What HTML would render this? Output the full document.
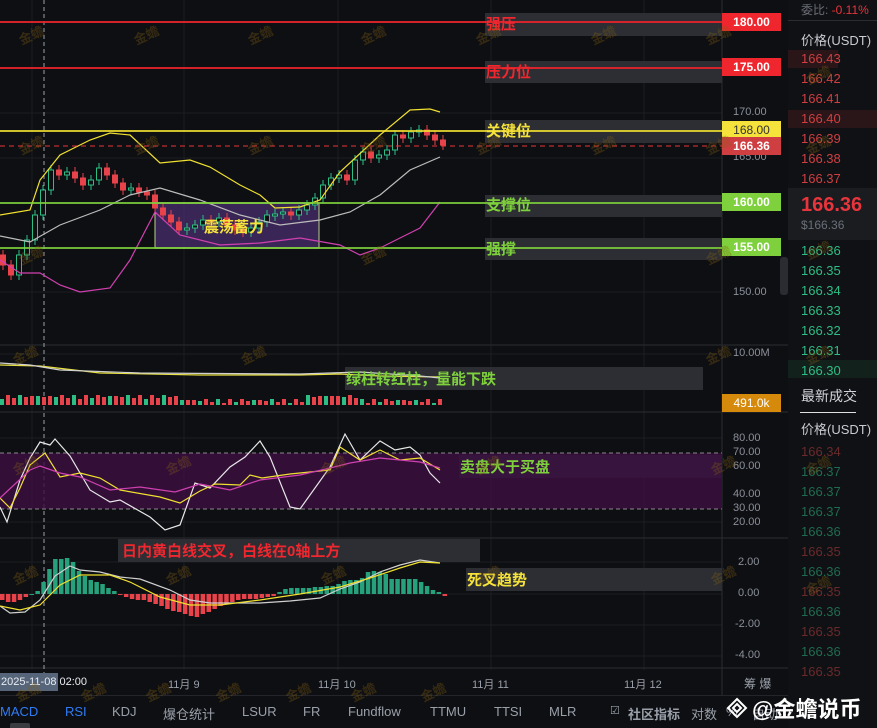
<!DOCTYPE html>
<html><head><meta charset="utf-8">
<style>
*{margin:0;padding:0;box-sizing:border-box}
body{width:877px;height:728px;background:#0e0f12;overflow:hidden;position:relative;font-family:"Liberation Sans","Noto Sans CJK SC",sans-serif;color:#c8cbd2}
.abs{position:absolute;white-space:nowrap}
.ax{position:absolute;left:733px;font-size:11px;color:#8a8f9a}
.tag{position:absolute;left:722px;width:59px;height:18px;font-size:12px;font-weight:bold;color:#fff;text-align:center;line-height:18px}
.rp{position:absolute;left:801px;font-size:13px}
.tb{position:absolute;top:704px;font-size:13px;color:#9aa0aa}
</style></head><body>
<svg width="788" height="700" style="position:absolute;left:0;top:0" id="s">
<g stroke="#1c1e23" stroke-width="1">
<line x1="32" y1="0" x2="32" y2="670"/><line x1="184" y1="0" x2="184" y2="670"/><line x1="338" y1="0" x2="338" y2="670"/><line x1="491" y1="0" x2="491" y2="670"/><line x1="644" y1="0" x2="644" y2="670"/>
<line x1="0" y1="113" x2="722" y2="113"/><line x1="0" y1="158" x2="722" y2="158"/><line x1="0" y1="292" x2="722" y2="292"/>
<line x1="0" y1="354" x2="722" y2="354"/><line x1="0" y1="438" x2="722" y2="438"/><line x1="0" y1="522" x2="722" y2="522"/>
<line x1="0" y1="562" x2="722" y2="562"/><line x1="0" y1="594" x2="722" y2="594"/><line x1="0" y1="625" x2="722" y2="625"/><line x1="0" y1="656" x2="722" y2="656"/>
</g>
<line x1="722" y1="0" x2="722" y2="695" stroke="#2a2c31"/>
<line x1="0" y1="345" x2="788" y2="345" stroke="#2a2c31"/><line x1="0" y1="412" x2="788" y2="412" stroke="#2a2c31"/><line x1="0" y1="538" x2="788" y2="538" stroke="#2a2c31"/><line x1="0" y1="668" x2="788" y2="668" stroke="#2a2c31"/>
<line x1="44" y1="0" x2="44" y2="690" stroke="#9aa0aa" stroke-dasharray="4 3"/>
<g fill="#2c2e33">
<rect x="485" y="13" width="237" height="23"/><rect x="485" y="61" width="237" height="22"/><rect x="485" y="120" width="237" height="23"/><rect x="485" y="195" width="237" height="22"/><rect x="485" y="238" width="237" height="22"/>
<rect x="345" y="367" width="358" height="23"/><rect x="459" y="455" width="263" height="23"/><rect x="118" y="539" width="362" height="23"/><rect x="466" y="568" width="256" height="23"/>
</g>
<rect x="155" y="203" width="164" height="45" fill="#4a2f6e" fill-opacity=".75" stroke="#b8d08a" stroke-width="1"/>
<rect x="0" y="453" width="722" height="56" fill="#3a0f40" fill-opacity=".85"/>
<line x1="0" y1="453" x2="722" y2="453" stroke="#888" stroke-dasharray="4 3"/><line x1="0" y1="509" x2="722" y2="509" stroke="#888" stroke-dasharray="4 3"/>
<g id="cand"></g><g id="vol"></g><g id="macd"></g>
<g fill="none" stroke-width="1.2">
<polyline stroke="#f0e030" points="0,215 30,210 40,180 60,155 90,140 110,133 130,135 160,163 190,160 210,167 240,185 260,195 275,208 300,207 320,200 340,172 380,135 410,110 430,109 440,112"/>
<polyline stroke="#bcbcbc" points="0,236 30,242 60,225 100,210 130,195 160,188 200,200 240,215 280,225 320,220 350,212 380,195 410,170 440,157"/>
<polyline stroke="#d040b0" points="0,260 20,273 40,273 60,285 80,292 110,288 130,260 155,212 180,235 220,245 260,243 300,238 340,245 360,255 380,248 400,238 420,228 440,202"/>
<polyline stroke="#e8e8e8" points="0,507 7,522 20,480 30,458 40,442 50,445 55,439 70,456 90,490 110,502 120,500 150,517 165,530 180,525 195,483 210,488 230,467 245,457 260,441 270,457 290,507 300,509 330,467 345,434 360,460 380,441 395,450 410,447 420,455 430,473 440,483"/>
<polyline stroke="#f0e030" points="0,498 10,508 20,488 30,465 45,453 60,477 80,473 100,478 120,490 160,497 180,503 200,491 215,484 240,485 250,475 262,478 290,474 300,473 330,470 340,447 360,460 380,450 400,460 420,458 440,470"/>
<polyline stroke="#d040b0" points="0,498 30,470 40,466 60,473 80,477 110,490 140,487 175,492 200,484 230,490 260,480 300,475 330,468 350,463 380,458 420,462 440,468"/>
<polyline stroke="#d0d0d0" points="0,606 10,613 25,612 40,600 55,576 70,566 80,570 100,572 120,577 140,579 170,590 190,600 210,603 230,603 260,603 290,601 320,598 340,589 360,582 380,572 400,565 420,560 440,563"/>
<polyline stroke="#f0e030" points="0,606 20,610 40,605 60,585 80,575 110,575 130,582 160,597 190,605 220,605 260,600 300,594 340,587 370,578 400,568 420,562 440,563"/>
<polyline stroke="#e8e040" points="0,365 40,366 100,373 200,375 300,375 340,374 380,376 440,377"/>
<polyline stroke="#d0d0d0" points="0,363 30,365 60,370 140,373 300,374 360,372 420,376 440,378"/>
</g>
<line x1="0" y1="22" x2="722" y2="22" stroke="#e8242c" stroke-width="2" opacity=".9"/>
<line x1="0" y1="68" x2="722" y2="68" stroke="#e8242c" stroke-width="2" opacity=".9"/>
<line x1="0" y1="131" x2="722" y2="131" stroke="#f0e030" stroke-width="2" opacity=".85"/>
<line x1="0" y1="146" x2="722" y2="146" stroke="#e8343c" stroke-dasharray="5 4"/>
<line x1="0" y1="203" x2="722" y2="203" stroke="#7ed03c" stroke-width="2" opacity=".85"/>
<line x1="0" y1="248" x2="722" y2="248" stroke="#7ed03c" stroke-width="2" opacity=".85"/>
</svg>
<div class="abs" style="left:486px;top:13px;font-size:15px;font-weight:bold;color:#f2262e">强压</div>
<div class="abs" style="left:486px;top:61px;font-size:15px;font-weight:bold;color:#f2262e">压力位</div>
<div class="abs" style="left:486px;top:120px;font-size:15px;font-weight:bold;color:#f5e23a">关键位</div>
<div class="abs" style="left:486px;top:194px;font-size:15px;font-weight:bold;color:#7ed03c">支撑位</div>
<div class="abs" style="left:486px;top:238px;font-size:15px;font-weight:bold;color:#7ed03c">强撑</div>
<div class="abs" style="left:204px;top:216px;font-size:15px;font-weight:bold;color:#f5e23a">震荡蓄力</div>
<div class="abs" style="left:346px;top:368px;font-size:15px;font-weight:bold;color:#7ed03c">绿柱转红柱，量能下跌</div>
<div class="abs" style="left:460px;top:456px;font-size:15px;font-weight:bold;color:#7ed03c">卖盘大于买盘</div>
<div class="abs" style="left:122px;top:540px;font-size:15px;font-weight:bold;color:#f2262e">日内黄白线交叉，白线在0轴上方</div>
<div class="abs" style="left:467px;top:569px;font-size:15px;font-weight:bold;color:#f5e23a">死叉趋势</div>
<div class="ax" style="top:106px">170.00</div>
<div class="ax" style="top:151px">165.00</div>
<div class="ax" style="top:286px">150.00</div>
<div class="ax" style="top:347px">10.00M</div>
<div class="ax" style="top:432px">80.00</div>
<div class="ax" style="top:446px">70.00</div>
<div class="ax" style="top:460px">60.00</div>
<div class="ax" style="top:488px">40.00</div>
<div class="ax" style="top:502px">30.00</div>
<div class="ax" style="top:516px">20.00</div>
<div class="ax" style="top:556px;left:738px">2.00</div>
<div class="ax" style="top:587px;left:738px">0.00</div>
<div class="ax" style="top:618px;left:735px">-2.00</div>
<div class="ax" style="top:649px;left:735px">-4.00</div>
<div class="tag" style="top:13px;background:#f0262e">180.00</div>
<div class="tag" style="top:58px;background:#f0262e">175.00</div>
<div class="tag" style="top:121px;background:#f5e23a;color:#333;font-weight:normal">168.00</div>
<div class="tag" style="top:137px;background:#cf3f42">166.36</div>
<div class="tag" style="top:193px;background:#7ed03c">160.00</div>
<div class="tag" style="top:238px;background:#7ed03c">155.00</div>
<div class="tag" style="top:394px;background:#d68a0c;font-weight:normal">491.0k</div>
<div class="abs" style="left:780px;top:257px;width:8px;height:38px;background:#2a2c31;border-radius:3px"></div>
<div class="abs" style="left:0;top:673px;width:58px;height:18px;background:#56657a;color:#e8ecf2;font-size:11px;line-height:18px;padding-left:1px">2025-11-08 02:00</div>
<div class="abs" style="left:168px;top:676px;font-size:11px;color:#9aa0aa">11月 9</div>
<div class="abs" style="left:318px;top:676px;font-size:11px;color:#9aa0aa">11月 10</div>
<div class="abs" style="left:472px;top:676px;font-size:11px;color:#9aa0aa">11月 11</div>
<div class="abs" style="left:624px;top:676px;font-size:11px;color:#9aa0aa">11月 12</div>
<div class="abs" style="left:744px;top:675px;font-size:12px;color:#9aa0aa">筹 爆</div>
<div class="abs" style="left:0;top:695px;width:788px;height:1px;background:#23252a"></div>
<div class="tb" style="left:0;color:#2f7cf6">MACD</div>
<div class="tb" style="left:65px;color:#2f7cf6">RSI</div>
<div class="tb" style="left:112px">KDJ</div>
<div class="tb" style="left:163px">爆仓统计</div>
<div class="tb" style="left:242px">LSUR</div>
<div class="tb" style="left:303px">FR</div>
<div class="tb" style="left:348px">Fundflow</div>
<div class="tb" style="left:430px">TTMU</div>
<div class="tb" style="left:494px">TTSI</div>
<div class="tb" style="left:549px">MLR</div>
<div class="tb" style="left:610px;font-size:11px">☑</div>
<div class="tb" style="left:628px;font-weight:bold">社区指标</div>
<div class="tb" style="left:691px">对数</div>
<div class="tb" style="left:726px">%</div>
<div class="tb" style="left:752px">自动</div>
<div class="abs" style="left:10px;top:723px;width:20px;height:5px;background:#3a3c42;border-radius:2px 2px 0 0"></div>
<div class="abs" style="left:788px;top:0;width:89px;height:728px;background:#101114"></div>
<div class="rp" style="top:1px;color:#6a6f78;font-size:12px">委比: <span style="color:#e8343c">-0.11%</span></div>
<div class="abs" style="left:788px;top:20px;width:89px;height:1px;background:#2a2c31"></div>
<div class="rp" style="top:30px;color:#c8cbd2">价格(USDT)</div>
<div class="abs" style="left:788px;top:50px;width:50px;height:18px;background:#2a1618"></div>
<div class="abs" style="left:788px;top:110px;width:89px;height:18px;background:#2a1618"></div>
<div class="rp" style="top:51px;color:#cf3f42">166.43</div>
<div class="rp" style="top:71px;color:#cf3f42">166.42</div>
<div class="rp" style="top:91px;color:#cf3f42">166.41</div>
<div class="rp" style="top:111px;color:#cf3f42">166.40</div>
<div class="rp" style="top:131px;color:#cf3f42">166.39</div>
<div class="rp" style="top:151px;color:#cf3f42">166.38</div>
<div class="rp" style="top:171px;color:#cf3f42">166.37</div>
<div class="abs" style="left:788px;top:188px;width:89px;height:52px;background:#1a1c20"></div>
<div class="rp" style="top:194px;color:#e8343c;font-size:20px;font-weight:bold">166.36</div>
<div class="rp" style="top:218px;color:#6a6f78;font-size:12px">$166.36</div>
<div class="abs" style="left:788px;top:360px;width:89px;height:18px;background:#13211c"></div>
<div class="rp" style="top:243px;color:#2ebd85">166.36</div>
<div class="rp" style="top:263px;color:#2ebd85">166.35</div>
<div class="rp" style="top:283px;color:#2ebd85">166.34</div>
<div class="rp" style="top:303px;color:#2ebd85">166.33</div>
<div class="rp" style="top:323px;color:#2ebd85">166.32</div>
<div class="rp" style="top:343px;color:#2ebd85">166.31</div>
<div class="rp" style="top:363px;color:#2ebd85">166.30</div>
<div class="rp" style="top:386px;color:#d0d3da;font-size:14px">最新成交</div>
<div class="abs" style="left:800px;top:412px;width:56px;height:1px;background:#e0e0e0"></div>
<div class="rp" style="top:419px;color:#c8cbd2">价格(USDT)</div>
<div class="rp" style="top:444px;color:#6a2a2c">166.34</div>
<div class="rp" style="top:464px;color:#1f6b50">166.37</div>
<div class="rp" style="top:484px;color:#1f6b50">166.37</div>
<div class="rp" style="top:504px;color:#1f6b50">166.37</div>
<div class="rp" style="top:524px;color:#1f6b50">166.36</div>
<div class="rp" style="top:544px;color:#6a2a2c">166.35</div>
<div class="rp" style="top:564px;color:#1f6b50">166.36</div>
<div class="rp" style="top:584px;color:#6a2a2c">166.35</div>
<div class="rp" style="top:604px;color:#1f6b50">166.36</div>
<div class="rp" style="top:624px;color:#6a2a2c">166.35</div>
<div class="rp" style="top:644px;color:#1f6b50">166.36</div>
<div class="rp" style="top:664px;color:#6a2a2c">166.35</div>
<div id="wm"></div>
<svg width="22" height="22" style="position:absolute;left:726px;top:697px" viewBox="0 0 22 22"><g fill="none" stroke="#fff" stroke-width="2"><path d="M11 2 L20 11 L11 20 L2 11 Z"/><path d="M11 7 L15 11 L11 15 L7 11 Z"/></g></svg>
<div class="abs" style="left:752px;top:692px;font-size:22px;color:#fff;font-weight:bold">@金蟾说币</div>
<script>
var NS="http://www.w3.org/2000/svg";
function el(p,t,a){var e=document.createElementNS(NS,t);for(var k in a)e.setAttribute(k,a[k]);p.appendChild(e);return e;}
var C=[265,275,255,240,215,190,170,175,172,178,185,180,168,175,183,190,188,192,195,208,215,222,230,228,225,220,222,218,225,230,232,228,222,215,214,212,215,210,205,198,185,178,175,180,160,152,158,155,150,135,138,132,130,135,140,145];
var g=document.getElementById('cand'),prev=255;
C.forEach(function(c,i){var x=3+i*8,o=prev,up=c<o,col=up?'#2ebd85':'#e8434a';
var t=Math.min(o,c),b=Math.max(o,c);if(b-t<2)b=t+2;
el(g,'line',{x1:x,y1:t-5,x2:x,y2:b+5,stroke:col});
el(g,'rect',{x:x-2.5,y:t,width:5,height:b-t,fill:up?'#0e0f12':col,stroke:col,'stroke-width':1});prev=c;});
var v=document.getElementById('vol');
for(var i=0;i<74;i++){var x=i*6,h=2+Math.round(Math.abs(Math.sin(i*1.7))*4)+(i<30?4:0)+(i>50&&i<60?4:0);el(v,'rect',{x:x,y:405-h,width:4,height:h,fill:(i%3?'#e8434a':'#2ebd85')});}
var M=[-6,-8,-8,-6,-3,0,3,12,25,35,35,36,32,23,18,14,12,10,6,3,-1,-3,-5,-6,-6,-8,-10,-12,-15,-17,-18,-20,-22,-23,-20,-18,-15,-12,-10,-8,-6,-5,-5,-5,-4,-3,-2,2,5,6,6,6,6,7,7,8,8,10,13,14,14,16,22,23,22,20,15,15,15,15,15,12,8,4,2,-2];
var m=document.getElementById('macd');
M.forEach(function(h,i){var x=i*5.9;var col=h>=0?'#26a17b':'#e8434a';el(m,'rect',{x:x,y:h>=0?594-h:594,width:4.5,height:Math.max(Math.abs(h),1),fill:col});});
var w=document.getElementById('wm');
[[18,25],[133,25],[247,25],[360,25],[475,25],[590,25],[705,25],[18,135],[133,135],[247,135],[360,135],[475,135],[590,135],[705,135],[18,245],[360,245],[705,245],[12,345],[240,345],[705,345],[12,455],[165,455],[320,455],[475,455],[710,455],[12,565],[165,565],[320,565],[475,565],[710,565],[15,682],[80,682],[145,682],[215,682],[285,682],[350,682],[420,682],[805,65],[805,135],[805,240],[805,345],[805,455],[805,575]].forEach(function(p){var d=document.createElement('div');d.className='abs';d.textContent='金蟾';d.style.cssText='left:'+p[0]+'px;top:'+p[1]+'px;font-size:13px;font-weight:bold;color:rgba(130,95,20,.35);transform:rotate(-25deg)';w.appendChild(d);});
</script>
</body></html>
